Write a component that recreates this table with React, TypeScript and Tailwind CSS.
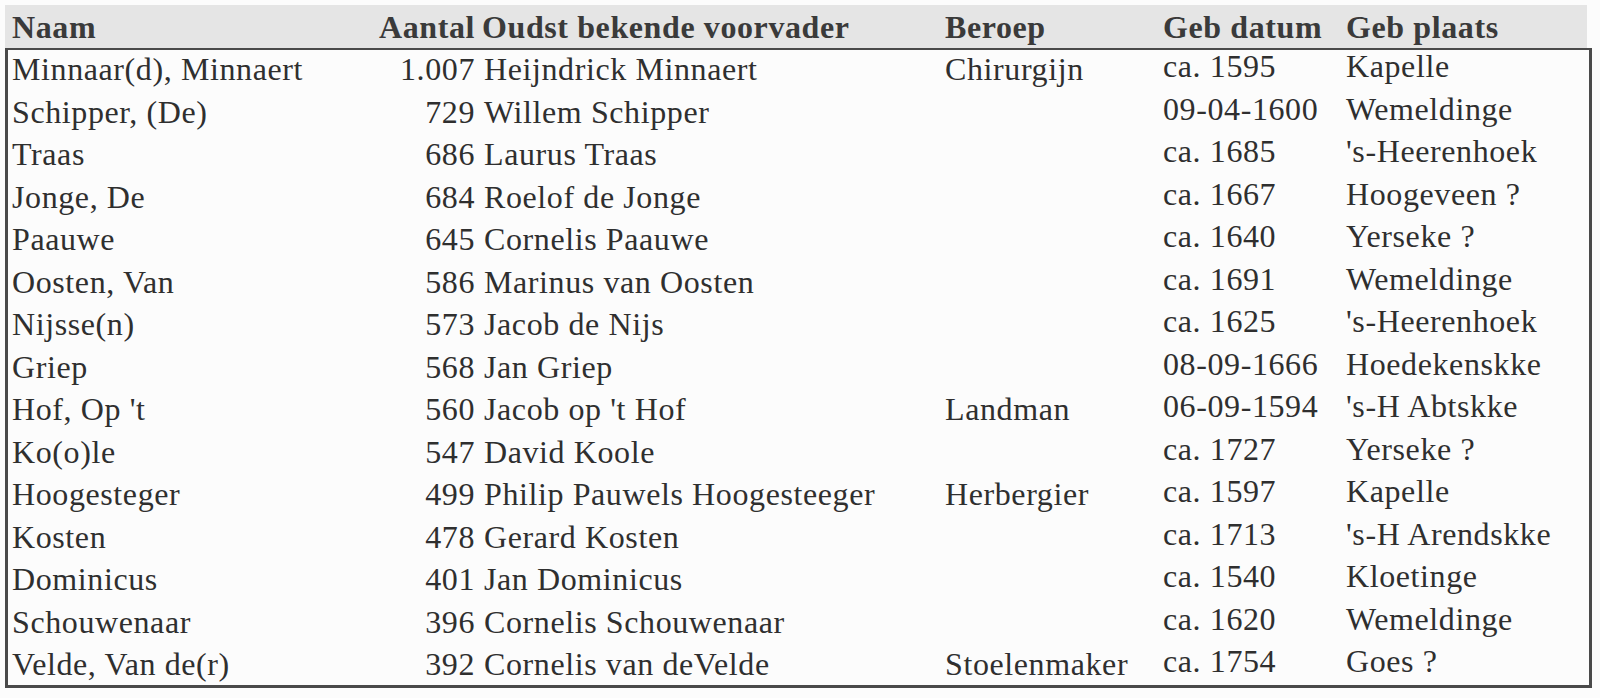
import React from 'react';

type Row = {
  naam: string;
  aantal: string;
  voorvader: string;
  beroep: string;
  datum: string;
  plaats: string;
};

const rows: Row[] = [
  { naam: "Minnaar(d), Minnaert", aantal: "1.007", voorvader: "Heijndrick Minnaert", beroep: "Chirurgijn", datum: "ca. 1595", plaats: "Kapelle" },
  { naam: "Schipper, (De)", aantal: "729", voorvader: "Willem Schipper", beroep: "", datum: "09-04-1600", plaats: "Wemeldinge" },
  { naam: "Traas", aantal: "686", voorvader: "Laurus Traas", beroep: "", datum: "ca. 1685", plaats: "'s-Heerenhoek" },
  { naam: "Jonge, De", aantal: "684", voorvader: "Roelof de Jonge", beroep: "", datum: "ca. 1667", plaats: "Hoogeveen ?" },
  { naam: "Paauwe", aantal: "645", voorvader: "Cornelis Paauwe", beroep: "", datum: "ca. 1640", plaats: "Yerseke ?" },
  { naam: "Oosten, Van", aantal: "586", voorvader: "Marinus van Oosten", beroep: "", datum: "ca. 1691", plaats: "Wemeldinge" },
  { naam: "Nijsse(n)", aantal: "573", voorvader: "Jacob de Nijs", beroep: "", datum: "ca. 1625", plaats: "'s-Heerenhoek" },
  { naam: "Griep", aantal: "568", voorvader: "Jan Griep", beroep: "", datum: "08-09-1666", plaats: "Hoedekenskke" },
  { naam: "Hof, Op 't", aantal: "560", voorvader: "Jacob op 't Hof", beroep: "Landman", datum: "06-09-1594", plaats: "'s-H Abtskke" },
  { naam: "Ko(o)le", aantal: "547", voorvader: "David Koole", beroep: "", datum: "ca. 1727", plaats: "Yerseke ?" },
  { naam: "Hoogesteger", aantal: "499", voorvader: "Philip Pauwels Hoogesteeger", beroep: "Herbergier", datum: "ca. 1597", plaats: "Kapelle" },
  { naam: "Kosten", aantal: "478", voorvader: "Gerard Kosten", beroep: "", datum: "ca. 1713", plaats: "'s-H Arendskke" },
  { naam: "Dominicus", aantal: "401", voorvader: "Jan Dominicus", beroep: "", datum: "ca. 1540", plaats: "Kloetinge" },
  { naam: "Schouwenaar", aantal: "396", voorvader: "Cornelis Schouwenaar", beroep: "", datum: "ca. 1620", plaats: "Wemeldinge" },
  { naam: "Velde, Van de(r)", aantal: "392", voorvader: "Cornelis van deVelde", beroep: "Stoelenmaker", datum: "ca. 1754", plaats: "Goes ?" },
];

// column grid shared by the header band and the rows
const cols = "grid grid-cols-[363px_100px_470px_218px_183px_1fr]";
const cell = "font-['Liberation_Serif','Times_New_Roman',serif] text-[32px] tracking-[0.6px]";

export default function App() {
  return (
    <div className="min-h-screen w-[1600px] bg-[#fcfcfc] pl-[5px] pt-[5px] text-[#2f2f2f]">
      {/* header band */}
      <div className={`${cols} h-[43px] w-[1582px] bg-[#e5e5e5] pl-[7px] pt-[2px] leading-[41px] text-[#3a3a3a]`}>
        <div className={`${cell} font-bold`}>Naam</div>
        <div className={`${cell} font-bold text-right`}>Aantal</div>
        <div className={`${cell} font-bold pl-[7px]`}>Oudst bekende voorvader</div>
        <div className={`${cell} font-bold`}>Beroep</div>
        <div className={`${cell} font-bold`}>Geb datum</div>
        <div className={`${cell} font-bold`}>Geb plaats</div>
      </div>

      {/* bordered body */}
      <div className="h-[640px] w-[1587px] border-x-[3px] border-t-2 border-b-[3px] border-[#4a4a4a] pl-[4px]">
        {rows.map((r) => (
          <div key={r.naam} className={`${cols} h-[42.5px] whitespace-nowrap`}>
            <div className={`${cell} pb-[4px] leading-[38.5px]`}>{r.naam}</div>
            <div className={`${cell} pb-[4px] text-right leading-[38.5px]`}>{r.aantal}</div>
            <div className={`${cell} pb-[4px] pl-[9px] leading-[38.5px]`}>{r.voorvader}</div>
            <div className={`${cell} pb-[4px] leading-[38.5px]`}>{r.beroep}</div>
            <div className={`${cell} pb-[10px] leading-[32.5px]`}>{r.datum}</div>
            <div className={`${cell} pb-[10px] leading-[32.5px]`}>{r.plaats}</div>
          </div>
        ))}
      </div>
    </div>
  );
}
